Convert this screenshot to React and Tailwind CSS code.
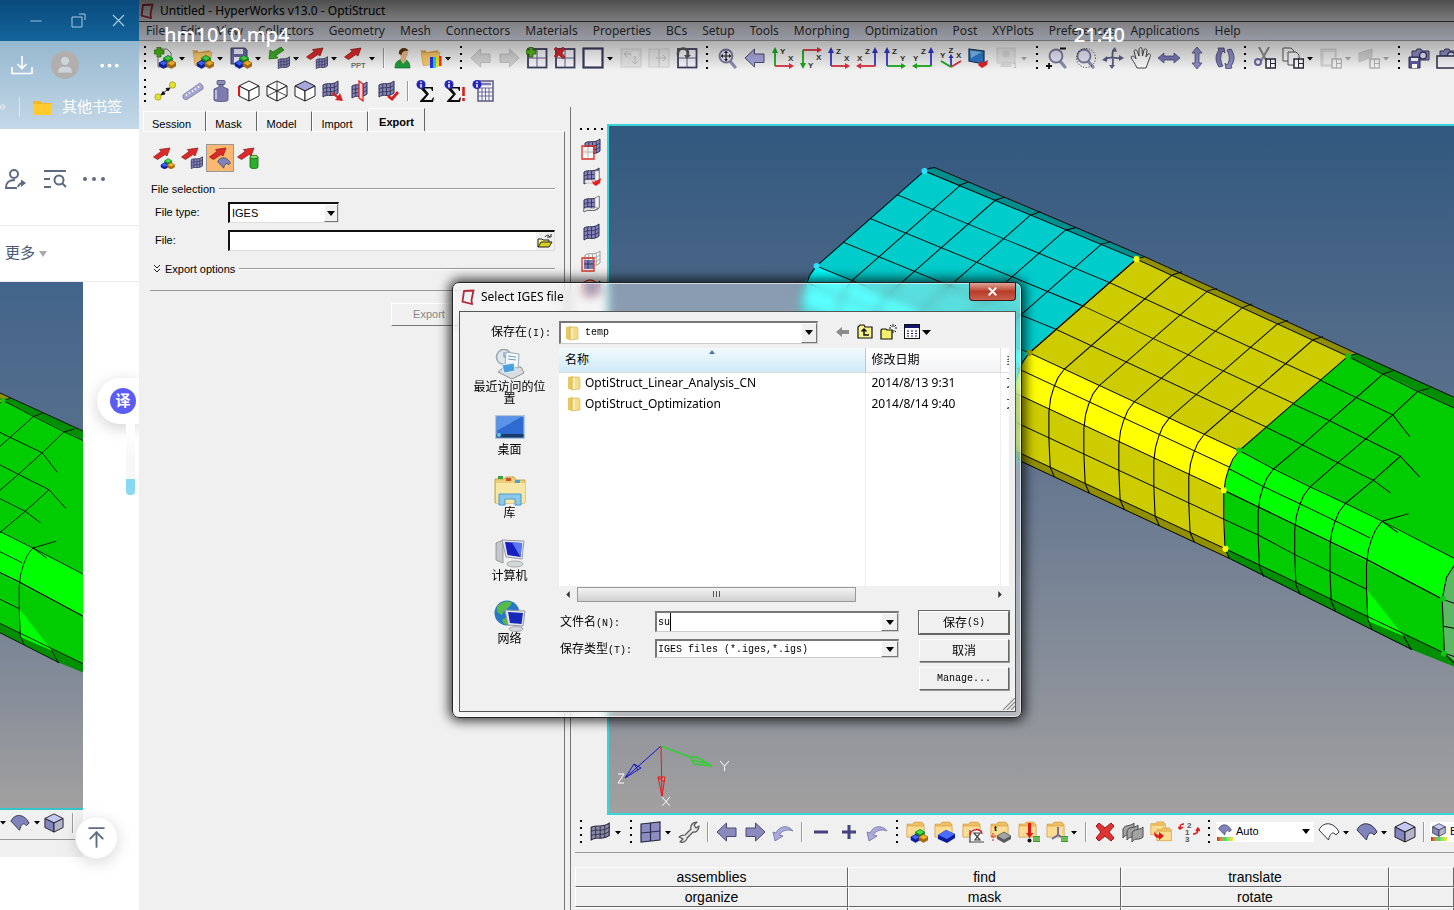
import React, { useState } from "react";
import { Minus, X, User, MoreHorizontal, ChevronsRight, ArrowUpToLine } from "lucide-react";

/* ---------- small drawing parts shared by the toolbar icons (22 x 22 box) ---------- */

function Block({ x, y, top, side }) {
  return (
    <g transform={`translate(${x} ${y})`} stroke={side} strokeWidth="0.6">
      <path d="M0 2.6 4.5 0 9 2.6V5.4L4.5 8 0 5.4Z" fill={side} />
      <path d="M0 2.6 4.5 0 9 2.6 4.5 5.2Z" fill={top} />
    </g>
  );
}

function Blocks() {
  return (
    <g>
      <Block x={9.5} y={8.5} top="#4be04b" side="#0b8a1c" />
      <Block x={5} y={13.5} top="#3c66ff" side="#0a1c9c" />
      <Block x={13} y={13.5} top="#f7b42c" side="#a86a08" />
    </g>
  );
}

function Mesh({ x = 0, y = 0, s = 1, fill = "#8484c0", line = "#2c2c48" }) {
  return (
    <g transform={`translate(${x} ${y}) scale(${s})`} stroke={line}>
      <path d="M1 5C6 2 10 6 16 1V13C10 18 6 13 1 17Z" fill={fill} strokeWidth="1" />
      <path d="M1 9C6 6 10 10 16 5M1 13C6 10 10 14 16 9M4.7 4V15M8.5 4V15.500M12.300 3.500V15" fill="none" strokeWidth="0.8" />
    </g>
  );
}

function OutArrow({ fill = "#dc2a2a", edge = "#8a1414" }) {
  return <path d="M0.500 10 8 4.500 6.500 2.500 17 1 14 9 12 7.500 4.500 12.500Z" fill={fill} stroke={edge} strokeWidth="0.7" />;
}

function Folder({ fill = "#f6c869" }) {
  return (
    <g>
      <path d="M1 3.500 5 3 7 5 18 3V16L3 18Z" fill="#e0a94c" />
      <path d="M1 3.500 3 6 20 5 18 17 3 18.500Z" fill={fill} stroke="#c99238" strokeWidth="0.5" />
    </g>
  );
}

// upright folder used by the model entity buttons
function TabFolder() {
  return (
    <g stroke="#c99238" strokeWidth="0.5">
      <path d="M1 3H7L8 1H16L17 3H18V16H1Z" fill="#f0bf60" />
      <path d="M1 5H18V16H1Z" fill="#fbdc90" />
    </g>
  );
}

function Grid4() {
  return (
    <g>
      <rect x="2" y="2" width="18.500" height="18.500" fill="#f4f4fa" stroke="#3e3e5e" strokeWidth="1.800" />
      <path d="M11 3V20M3 11H20" stroke="#5a5a7c" strokeWidth="1" />
    </g>
  );
}

function Surface({ fill = "#7f83bb" }) {
  return (
    <path
      d="M1 9C3 4 8 2 12 3 16 4 19 7 21 11L18 14C15 10 12 12 10.500 19L1 9Z"
      fill={fill}
      stroke="#333348"
      strokeWidth="1"
      strokeLinejoin="round"
    />
  );
}

function Cube({ top = "none", left = "none", right = "none", x = 0 }) {
  return (
    <g transform={`translate(${x} 0)`} stroke="#1e1e1e" strokeWidth="1" strokeLinejoin="round">
      <path d="M1 6 11 1 21 6 11 11Z" fill={top} />
      <path d="M1 6V16L11 21V11Z" fill={left} />
      <path d="M21 6V16L11 21V11Z" fill={right} />
    </g>
  );
}

function Lens() {
  return (
    <g>
      <path d="M13 13 19 20" stroke="#8a8ab0" strokeWidth="3.200" strokeLinecap="round" />
      <circle cx="10" cy="9" r="6.500" fill="#e4e6f6" stroke="#77779b" strokeWidth="1.800" />
    </g>
  );
}

function MiniGrid() {
  return (
    <g>
      <rect x="12" y="12" width="9.500" height="9" fill="#fff" stroke="#2a2a3a" strokeWidth="1.500" />
      <path d="M16.500 12V21M16.500 16.500H21" stroke="#2a2a3a" strokeWidth="1" />
    </g>
  );
}

function BigArrow({ flip, fill = "#8a8abf" }) {
  return (
    <path
      transform={flip ? "translate(22 0) scale(-1 1)" : undefined}
      d="M1 11 10.500 2V7H20V15.500H10.500V20Z"
      fill={fill}
      stroke="#4a4a70"
      strokeWidth="1"
    />
  );
}

function Undo() {
  return <path d="M1 11 3 20 11 15 7.500 14C10 9 16 8 21 10 16 3 7 5 4 12Z" fill="#a9a9dc" stroke="#6e6ea4" strokeWidth="0.8" />;
}

function Info() {
  return (
    <g>
      <circle cx="5" cy="4.500" r="4.500" fill="#2626b8" />
      <path d="M5 1.500V3M5 4V7.500" stroke="#fff" strokeWidth="1.500" />
    </g>
  );
}

function Sigma() {
  return <path d="M4 7H17V11H16L15 8.500H8.500L13 14 8 20H15.500L17 17.500H18L17 22H4V21L10 14.500 4 8Z" fill="#0a0a0a" />;
}

function Camera() {
  return (
    <g>
      <path d="M4 4H8L9 2H13L14 4H21V13H4Z" fill="#8a8ac0" stroke="#3a3a5c" strokeWidth="1" />
      <circle cx="15" cy="8.500" r="3.500" fill="#dfe3ff" stroke="#3a3a5c" strokeWidth="1.500" />
    </g>
  );
}

const COLORS = { r: "#d9303e", g: "#18a818", b: "#3535cc" };

function Axes({ up, side, upName, sideName, left, down }) {
  const x = left ? 19 : 3;
  const y = down ? 3 : 19;
  return (
    <g>
      <g fill="none" strokeWidth="1.800">
        <path d={down ? `M${x} 3V19` : `M${x} 19V3`} stroke={COLORS[up]} />
        <path d={left ? `M19 ${y}H3` : `M3 ${y}H19`} stroke={COLORS[side]} />
      </g>
      <path d={down ? `M${x - 3} 16H${x + 3}L${x} 22Z` : `M${x - 3} 6H${x + 3}L${x} 0Z`} fill={COLORS[up]} />
      <path d={left ? `M5 ${y - 3}V${y + 3}L0 ${y}Z` : `M17 ${y - 3}V${y + 3}L22 ${y}Z`} fill={COLORS[side]} />
      <g fontFamily="Liberation Sans" fontWeight="700" fontSize="8" fill="#333">
        <text x={left ? 9 : 8} y={down ? 21 : 7}>{upName}</text>
        <text x={left ? 1 : 16} y={down ? 13 : 14}>{sideName}</text>
      </g>
    </g>
  );
}

const PLUS = "M3 0H7V3H10V7H7V10H3V7H0V3H3Z";

const ICONS = {
  newModel: <><path d="M4 2H13L17 6V20H4Z" fill="#f2f2f2" stroke="#777" strokeWidth="1" /><path d={PLUS} fill="#4fb31c" stroke="#2c7008" strokeWidth="0.7" /><Blocks /></>,
  open: <><Folder /><Blocks /></>,
  save: <><path d="M1 1H15L17 3V17H1Z" fill="#6a6aa4" stroke="#3c3c64" strokeWidth="1" /><path d="M4 2H13V7H4ZM4 10H13V16H4Z" fill="#eef" /><Blocks /></>,
  importMesh: <><path d="M1 12 2 3 5 5 13 0 16 3 8 8.500 10 11Z" fill="#3fae28" stroke="#1e6a10" strokeWidth="0.7" /><Mesh x={9.500} y={9} s={0.75} /></>,
  exportMesh: <><OutArrow /><Mesh x={9.500} y={9} s={0.75} /></>,
  ppt: <><OutArrow /><text x="7" y="21" fontFamily="Liberation Sans" fontSize="7.500" fill="#333">PPT</text></>,
  user: <><path d="M3 21C3 14 7 13 11 12 17 13 18 17 18 21Z" fill="#1d9a3c" stroke="#0c6022" strokeWidth="0.6" /><path d="M9 9H14V14L11 17 8.500 13Z" fill="#e5b487" /><ellipse cx="12" cy="6.500" rx="4" ry="5" fill="#e8b88c" /><path d="M7 7C6 0 15 -1 16.500 4 13 3.500 10 4 9.500 8Z" fill="#5a3314" /></>,
  report: <><Folder /><path d="M10 10H13V21H10Z" fill="#2233ee" /><path d="M13 10H16V21H13Z" fill="#14d8e8" /><path d="M16 9H19V20H16Z" fill="#f4e310" /><path d="M19 9H21.500V19H19Z" fill="#ee2c14" /></>,
  back: <BigArrow />,
  forward: <BigArrow flip />,
  addPage: <><Grid4 /><path d={PLUS} fill="#58b81e" stroke="#25680a" strokeWidth="0.8" /></>,
  delPage: <><Grid4 /><path d="M0 2 2 0 5 3 9 0 11 2 8 6 11 10 9 12 5 8 2 11 0 9 3 6Z" fill="#d8262c" stroke="#7f1014" strokeWidth="0.5" /></>,
  window: <rect x="1.500" y="1.500" width="19" height="19" fill="#fbfbfd" stroke="#3a3a5a" strokeWidth="2.200" />,
  expand: <><rect x="1" y="2" width="20" height="18" fill="#c9c9cf" stroke="#888" /><path d="M4 7H11M4 7 7 4M4 7 7 10M15 9V17M12 14 15 17 18 14" stroke="#555" fill="none" /><rect x="12" y="4" width="6" height="5" fill="#eee" /></>,
  swap: <><rect x="1" y="2" width="20" height="18" fill="#d6d6dc" stroke="#888" /><path d="M11 2V20M8 11H18M15 8 18 11 15 14" stroke="#555" fill="none" /></>,
  syncPage: <><Grid4 /><path d="M2 8C1 1 10 -1 12 5V9" fill="none" stroke="#555" strokeWidth="2.500" /><path d="M8 8H15L11 12Z" fill="#555" /></>,
  fit: <><Lens /><path d="M10 4.500V13.500M5.500 9H14.500" stroke="#222" strokeWidth="1.200" /><path d="M10 3.500 8 6H12ZM10 14.500 8 12H12ZM4.500 9 7 7V11ZM15.500 9 13 7V11Z" fill="#222" /></>,
  prevView: <BigArrow fill="#a6a6dc" />,
  xy: <Axes up="g" side="r" upName="Y" sideName="X" />,
  yx: <Axes up="g" side="r" upName="Y" sideName="X" down />,
  xz: <Axes up="b" side="r" upName="Z" sideName="X" />,
  zx: <Axes up="b" side="r" upName="Z" sideName="X" left />,
  yz: <Axes up="b" side="g" upName="Z" sideName="Y" />,
  zy: <Axes up="b" side="g" upName="Z" sideName="Y" left />,
  iso: <><path d="M11 20V8" stroke="#3535cc" strokeWidth="1.800" /><path d="M11 20 1 14" stroke="#18a818" strokeWidth="2" /><path d="M11 20 21 14" stroke="#d9303e" strokeWidth="2" /><path d="M8.500 11H13.500L11 7Z" fill="#3535cc" /><g fontFamily="Liberation Sans" fontWeight="700" fontSize="8" fill="#333"><text x="8.500" y="6">Z</text><text x="0" y="11">Y</text><text x="16" y="11">X</text></g></>,
  screenView: <><path d="M1 2 16 4V17L1 14Z" fill="#2c78c8" stroke="#16304c" strokeWidth="1.200" /><path d="M2 3.500 14 5 3 11Z" fill="#7ab8ee" /><path d="M10 18 13 14 14 16 20 13 19 18 14 21Z" fill="#e02020" /></>,
  userView: <><rect x="1" y="1" width="18" height="15" fill="#b4c8dc" stroke="#888" /><circle cx="10" cy="7" r="3.500" fill="#b08c74" /><path d="M4 20C5 12 15 12 16 20Z" fill="#6cb088" /><text x="17" y="21" fontSize="7" fontFamily="Liberation Sans">1</text></>,
  zoomInOut: <><Lens /><path d="M14 1.500H20M0 19H6M3 16V22" stroke="#111" strokeWidth="1.800" /></>,
  zoomBox: <><Lens /><ellipse cx="12" cy="11" rx="9.500" ry="9.500" fill="none" stroke="#222" strokeWidth="1" strokeDasharray="1 1.800" /></>,
  pan: <><path d="M12 2C8 8 13 14 10 20M4 12C8 9 14 12 20 11" fill="none" stroke="#5c5c84" strokeWidth="1.800" /><path d="M10 4 13 0 15 5ZM22 11 17 8V14ZM0 13 5 9V15ZM7 18 10 22 13 18Z" fill="#5c5c84" /></>,
  hand: <path d="M7 21C5 16 2 13 1 10 3 8 5 10 6 12L4 4C5 2 7 3 7.500 5L9 9 9 2C10 0 12 0 12 2L12.500 9 14 3C15 1 17 2 17 4L16 10 18 7C20 6 21 8 20 10L16 21Z" fill="#fafafa" stroke="#444" strokeWidth="1" />,
  leftRight: <path d="M0 11 6 6V9H16V6L22 11 16 16V13H6V16Z" fill="#7878b4" stroke="#4a4a78" strokeWidth="0.8" />,
  upDown: <path d="M11 0 16 6H13V16H16L11 22 6 16H9V6H6Z" fill="#8c8cc4" stroke="#4a4a78" strokeWidth="0.8" />,
  rotate: <><path d="M9 4C6 8 6 14 9 19L5 20C1 14 1 8 5 3L4 1 10 1 11 6Z" fill="#7a7ab4" stroke="#40406a" strokeWidth="0.8" /><path d="M13 3C16 8 16 14 13 18L11 16 12 22 18 21 17 19C21 14 21 8 17 2Z" fill="#8c8cc4" stroke="#40406a" strokeWidth="0.8" /></>,
  cut: <><path d="M5 0 12 13M15 0 7 14" stroke="#888" strokeWidth="2" /><circle cx="4" cy="15" r="3" fill="none" stroke="#6868a4" strokeWidth="2" /><MiniGrid /></>,
  copy: <><path d="M1 1H9L12 4V14H1Z" fill="#f8f8f8" stroke="#555" /><path d="M6 5H14L17 8V18H6Z" fill="#f8f8f8" stroke="#555" /><MiniGrid /></>,
  paste: <><rect x="1" y="2" width="15" height="17" fill="#b0b0c0" stroke="#777" /><rect x="4" y="5" width="10" height="12" fill="#eee" /><MiniGrid /></>,
  overlay: <><path d="M1 6 14 2V10L1 15Z" fill="#888" stroke="#666" /><MiniGrid /></>,
  saveShot: <><Camera /><path d="M1 10H12V21H1Z" fill="#5c5c9c" stroke="#2c2c50" /><path d="M3 11H10V14H3ZM4 17H9V21H4Z" fill="#fff" /></>,
  shot: <><Camera /><rect x="1" y="9" width="21" height="12" fill="#f2f2f6" stroke="#2c2c44" strokeWidth="1.500" /></>,
  distance: <><circle cx="4" cy="17" r="3.200" fill="#e2e22c" stroke="#8c8c18" strokeWidth="0.6" /><circle cx="18.500" cy="5" r="3.200" fill="#e2e22c" stroke="#8c8c18" strokeWidth="0.6" /><path d="M8 14 15 8.500M7 15 11 14 9 11.500ZM16 8 12 8.500 14 11Z" stroke="#111" strokeWidth="0.900" /></>,
  ruler: <><path d="M1 15 18 3 21 6V9L4 20 1 18Z" fill="#a6a6d4" stroke="#7676a4" strokeWidth="0.8" /><path d="M5 16 4 14M8 14 7 12M11 12 10 10M14 10 13 8M17 8 16 6" stroke="#fff" strokeWidth="1.200" /></>,
  mass: <><rect x="7" y="0.500" width="8" height="4" rx="1" fill="#8f8fbc" stroke="#4c4c74" strokeWidth="0.8" /><path d="M9 4.500H13V7L18 9V20C18 22 4 22 4 20V9L9 7Z" fill="#7c7cae" stroke="#4c4c74" strokeWidth="0.8" /><path d="M6 10V19" stroke="#c0c0e0" strokeWidth="2" /></>,
  cubeEdge: <><Cube top="#fff" left="#fff" right="#fff" /><path d="M1 6V16" stroke="#e01818" strokeWidth="2.200" /></>,
  cubeWire: <><Cube top="#fff" left="#fff" right="#fff" /><path d="M11 1V11M11 11 1 16M11 11 21 16" stroke="#333" strokeWidth="0.9" /></>,
  cubeTop: <Cube top="#a4a8dc" left="#fff" right="#fff" />,
  meshArrow: <><Mesh /><path d="M11 12 16 16 18 13 21 21 13 20 15 18 10 14Z" fill="#d81e1e" /></>,
  meshPlane: <><Mesh x={1} y={1} /><path d="M9 1 13 4V21L9 18Z" fill="#fbd3d3" stroke="#d81e1e" strokeWidth="1.200" /></>,
  meshCheck: <><Mesh /><path d="M10 16 14 19 20 12" fill="none" stroke="#d81e1e" strokeWidth="2.800" /></>,
  sigma: <><Sigma /><Info /></>,
  sigmaAlert: <><g transform="translate(-1 0)"><Sigma /></g><Info /><path d="M19.500 7V16M19.500 18V21" stroke="#d81e1e" strokeWidth="2.600" /></>,
  calc: <><rect x="6" y="1" width="15" height="20" fill="#f4f4fa" stroke="#5a5a80" strokeWidth="1.500" /><path d="M8 4H19" stroke="#7c7cac" strokeWidth="2.500" /><path d="M6 8H21M6 12H21M6 16H21M10 8V21M13.500 8V21M17 8V21" stroke="#6a6a94" strokeWidth="1" /><Info /></>,
  exportModel: <><OutArrow /><g transform="translate(4 5) scale(.8)"><Blocks /></g></>,
  exportGeom: <><OutArrow /><g transform="translate(8 9) scale(.64)"><Surface /></g></>,
  exportDrum: <><OutArrow /><path d="M13 10V20C13 22 21 22 21 20V10Z" fill="#2cb02c" stroke="#136013" strokeWidth="0.8" /><ellipse cx="17" cy="10" rx="4" ry="1.800" fill="#8ade60" stroke="#136013" strokeWidth="0.8" /></>,
  maskBox: <><Mesh x={4} y={0} /><path d="M4 9H13V20H4Z" fill="#fff" fillOpacity="0.9" /><path d="M2 8H14V21H2Z" fill="none" stroke="#dc3020" strokeWidth="1.300" /><path d="M8 9V20M3 14H13" stroke="#aaa" strokeWidth="0.8" /></>,
  maskCheck: <><Mesh x={3} y={1} /><path d="M15 5H19V14L15 15Z" fill="#f4f4f4" stroke="#999" strokeWidth="0.6" /><path d="M5 14H15V17H5Z" fill="#f4f4f4" stroke="#999" strokeWidth="0.6" /><path d="M12 15 15 16 21 12 20 17 16 20 13 18Z" fill="#e81e1e" /></>,
  maskPart: <><Mesh x={3} y={1} /><path d="M15 4 19 2V14L15 15Z" fill="#f4f4f4" stroke="#888" strokeWidth="0.6" /><path d="M4 15C8 12 12 16 17 13V15C12 18 8 14 4 18Z" fill="#f4f4f4" stroke="#888" strokeWidth="0.6" /></>,
  maskFull: <Mesh x={3} y={1} />,
  maskRev: <><Mesh x={4} y={0} fill="#f4f4f4" line="#999" /><path d="M4 10H14V19H4Z" fill="#7a7ab0" /><path d="M8 10V19M4 14H14" stroke="#2c2c48" strokeWidth="0.8" /><path d="M2 8H14V21H2Z" fill="none" stroke="#dc3020" strokeWidth="1.300" /></>,
  maskRound: <><Mesh x={4} y={2} /><circle cx="10" cy="10" r="8" fill="none" stroke="#dc3020" strokeWidth="1.500" /></>,
  meshGray: <g transform="translate(0 1) scale(1.200 1.050)"><Mesh fill="#8a8aa6" /></g>,
  fourView: <><path d="M1 3 20 1V19L1 21Z" fill="#8c8cc4" stroke="#2c2c44" strokeWidth="1.200" /><path d="M10.500 2V20M1 12 20 10" stroke="#2c2c44" strokeWidth="1.200" /></>,
  wrench: <path d="M1 16C3 14 5 14 7 14L13 8C12 4 15 1 19 1L16 4 18 7 21 5C21 9 18 12 15 11L9 17C9 20 5 22 2 21L5 18Z" fill="#e6e6e6" stroke="#555" strokeWidth="1.200" strokeLinejoin="round" />,
  undo: <Undo />,
  minus: <path d="M4 9.500H18V12.500H4Z" fill="#44447c" />,
  plus: <path d="M9.500 4H12.500V9.500H18V12.500H12.500V18H9.500V12.500H4V9.500H9.500Z" fill="#44447c" />,
  folderModel: <><TabFolder /><Blocks /></>,
  folderPart: <><TabFolder /><path d="M4 14 12 9 21 13V17L13 22 4 18Z" fill="#0c1c98" /><path d="M4 14 12 9 21 13 13 18Z" fill="#4a6cff" /></>,
  folderTime: <><TabFolder /><rect x="8" y="8" width="13" height="13" fill="#f4f4f4" /><path d="M8 21V9M7 21H22M12 12H18L13 19H18Z" fill="none" stroke="#444" strokeWidth="1.200" /><path d="M8 14C9 7 19 7 20 13" fill="none" stroke="#e01818" strokeWidth="1.500" /></>,
  folderTrace: <><TabFolder /><text x="4" y="10" fontFamily="Liberation Serif" fontWeight="700" fontSize="9">t</text><path d="M3 12V20M1 15H6" stroke="#d02020" strokeWidth="1" strokeDasharray="2 1" /><path d="M7 15 14 11 21 15V18L14 22 7 18Z" fill="#5c5c5c" /><path d="M7 15 14 11 21 15 14 19Z" fill="#a4a4a4" stroke="#444" strokeWidth="0.6" /></>,
  folderLoad: <><TabFolder /><path d="M10 2H13V12H15.500L11.500 17 8 12H10Z" fill="#e01818" /><circle cx="11.500" cy="19.500" r="2" fill="#111" /><path d="M15 15H22V21H15Z" fill="#3c9c24" /><path d="M15 17H22M15 19H22" stroke="#d4f0c8" strokeWidth="0.7" /></>,
  folderSys: <><TabFolder /><path d="M12 6V14L6 18M12 14 19 18" fill="none" stroke="#6868a4" strokeWidth="1.800" /><path d="M15 15H22V21H15Z" fill="#3c9c24" /><path d="M15 17H22M15 19H22" stroke="#d4f0c8" strokeWidth="0.7" /></>,
  remove: <path d="M2 5 5 2 11 7 17 2 20 5 15 11 20 17 17 20 11 15 5 20 2 17 7 11Z" fill="#e03434" stroke="#a01414" strokeWidth="1" strokeLinejoin="round" />,
  cards: <g fill="#a2a2a2" stroke="#4c4c4c" strokeWidth="1"><path d="M1 8C3 3 8 6 12 2V12C8 16 4 12 1 17Z" /><path d="M5 10C7 5 12 8 16 4V14C12 18 8 14 5 19Z" /><path d="M10 12C12 7 17 10 21 6V16C17 20 13 16 10 21Z" /></g>,
  moveFolder: <><g transform="scale(.85)"><TabFolder /></g><g transform="translate(6 6) scale(.85)"><TabFolder /></g><path d="M5 10C5 13 7 14 9 14V11L14 15 9 19V17C5 17 3 14 5 10Z" fill="#e01818" /></>,
  renumber: <><g fontFamily="Liberation Sans" fontSize="8" fontWeight="700" fill="#555"><text x="9" y="7">2</text><text x="7" y="14">1</text><text x="7" y="21">3</text></g><path d="M6 3C2 3 2 5 2 8M0 6 2 8 5 6M15 13C19 13 20 11 20 8M18 10 20 7 22 10" fill="none" stroke="#e01818" strokeWidth="1.500" /></>,
  surfWire: <Surface fill="#fafafa" />,
  surfFill: <Surface />,
  cubeFill: <Cube top="#c4c8f4" left="#8286c0" right="#b4b4cc" />,
};

function Icon({ name, className = "size-[22px]" }) {
  return (
    <svg viewBox="0 0 22 22" className={className} aria-hidden="true">
      {ICONS[name]}
    </svg>
  );
}

/* Each entry is [icon, label, flags]; ":" is a grip and "|" a divider. */
const TOP_ROW = [
  ":", ["newModel", "New", "m"], ["open", "Open", "m"], ["save", "Save", "m"], ["importMesh", "Import", "m"], ["exportMesh", "Export", "m"], ["ppt", "Export to PPT", "m"], "|",
  ["user", "User profiles"], ["report", "Report", "m"],
  ":", ["back", "Previous page", "d"], ["forward", "Next page", "d"], ["addPage", "Add page"], ["delPage", "Delete page"], ["window", "Page layout", "m"], ["expand", "Expand window", "d"], ["swap", "Swap windows", "d"], ["syncPage", "Synchronize"],
  ":", ["fit", "Fit"], ["prevView", "Previous view"], ["xy", "XY top"], ["yx", "XY bottom"], ["xz", "XZ left"], ["zx", "XZ right"], ["yz", "YZ front"], ["zy", "YZ rear"], ["iso", "Isometric"], ["screenView", "Reverse view"], ["userView", "User views", "dm"],
  ":", ["zoomInOut", "Zoom"], ["zoomBox", "Circle zoom"], ["pan", "Center"], ["hand", "Pan"], ["leftRight", "Rotate left/right"], ["upDown", "Rotate up/down"], ["rotate", "Rotate"],
  ":", ["cut", "Cut"], ["copy", "Copy", "m"], ["paste", "Paste", "dm"], ["overlay", "Overlay", "dm"],
  ":", ["saveShot", "Save image"], ["shot", "Capture"],
];

const CHECK_ROW = [
  ":", ["distance", "Distance"], ["ruler", "Length"], ["mass", "Mass"], ["cubeEdge", "Edges"], ["cubeWire", "Features"], ["cubeTop", "Faces"], ["meshArrow", "Normals"], ["meshPlane", "Penetration"], ["meshCheck", "Check elements"],
  "|", ["sigma", "Summary"], ["sigmaAlert", "Count"], ["calc", "Card editor"],
];

const BOTTOM_ROW = [
  ":", ["meshGray", "Mesh", "m"], ":", ["fourView", "Views", "m"], ["wrench", "Options"], "|", ["back", "Back"], ["forward", "Forward"], ["undo", "Undo view"], "|", ["minus", "Zoom out"], ["plus", "Zoom in"], ["undo", "Reset zoom"],
  ":", ["folderModel", "Assemblies"], ["folderPart", "Components"], ["folderTime", "Properties"], ["folderTrace", "Materials"], ["folderLoad", "Load collectors"], ["folderSys", "System collectors", "m"], "|",
  ["remove", "Delete"], ["cards", "Card edit"], ["moveFolder", "Organize"], ["renumber", "Renumber"], ":",
];

function Grip() {
  return (
    <span className="flex w-3 shrink-0 flex-col items-center gap-[5px]">
      {[0, 1, 2, 3].map((i) => (
        <span key={i} className="size-[2px] bg-black" />
      ))}
    </span>
  );
}

function Divider() {
  return <span className="mx-1 h-5 w-[2px] shrink-0 border-l border-[#999] bg-white" />;
}

function Tool({ icon, label, flags = "" }) {
  const dim = flags.includes("d");
  return (
    <span className={dim ? "flex shrink-0 items-center opacity-30 grayscale" : "flex shrink-0 items-center"}>
      <button type="button" aria-label={label} disabled={dim} className="flex h-7 w-7 items-center justify-center">
        <Icon name={icon} />
      </button>
      {flags.includes("m") && (
        <button type="button" aria-label={label + " menu"} disabled={dim} className="flex h-7 w-[10px] items-center justify-start">
          <svg viewBox="0 0 6 4" className="mt-[2px] h-1 w-[6px]"><path d="M0 0H6L3 3.500Z" fill="#000" /></svg>
        </button>
      )}
    </span>
  );
}

function ToolRow({ items }) {
  return items.map((item, i) => {
    if (item === ":") return <Grip key={i} />;
    if (item === "|") return <Divider key={i} />;
    return <Tool key={i} icon={item[0]} label={item[1]} flags={item[2]} />;
  });
}

/* ---------- finite element model ---------- */

const lerp = (a, b, t) => [a[0] + (b[0] - a[0]) * t, a[1] + (b[1] - a[1]) * t];

function gridLines(a, b, c, d, cols, rows) {
  let out = "";
  for (let i = 0; i <= cols; i++) out += `M${lerp(a, b, i / cols)}L${lerp(d, c, i / cols)}`;
  for (let j = 0; j <= rows; j++) out += `M${lerp(a, d, j / rows)}L${lerp(b, c, j / rows)}`;
  return out;
}

// the side wall drops away from a point of the front edge along this profile
const PROFILE = [[-15, 25], [-25, 55], [-32, 85], [-36, 125], [-36, 200], [-33, 285], [-23, 313]];

function sideLines(points) {
  return points.map(([x, y]) => `M${x},${y}` + PROFILE.map(([dx, dy]) => `L${x + dx},${y + dy}`).join("")).join("");
}

const A = [336, 90];
const B = [829, 346];
const C = [580, 618];
const D = [85, 366];
const E = [1321, 628];
const F = [1068, 902];
const frontCyan = [0, 1, 2, 3, 4, 5, 6].map((i) => lerp(D, C, i / 6));
const frontYellow = [0, 1, 2, 3, 4, 5, 6].map((i) => lerp(C, F, i / 6));
const frontGreen = [[1148, 955], [1233, 1007], [1315, 1055], [1400, 1107]];

function Dots({ points, fill }) {
  return points.map(([x, y]) => <ellipse key={x} cx={x} cy={y} rx="7" ry="9" fill={fill} />);
}

function Model() {
  return (
    <g strokeLinejoin="round">
      {/* cyan section */}
      <path d="M85 366 60 410 45 480 45 650 60 680 560 940 560 618Z" fill="#00cccc" />
      <path d="M85 366 60 410 45 480 545 748 580 618Z" fill="#00ffff" />
      <path d="M336 90 360 80 850 340 829 346Z" fill="#008f8f" />
      <path d="M336 90 829 346 580 618 85 366Z" fill="#00cccc" />
      {/* yellow section */}
      <path d="M547 903 1036 1187 1045 1215 557 931Z" fill="#8f8f00" />
      <path d="M544 733 1032 1017 1036 1187 547 903Z" fill="#cccc00" />
      <path d="M580 618 1068 902 1045 950 1032 1017 544 733 557 666Z" fill="#ffff00" />
      <path d="M829 346 850 338 1342 620 1321 628Z" fill="#8f8f00" />
      <path d="M829 346 1321 628 1068 902 580 618Z" fill="#cccc00" />
      {/* green section */}
      <path d="M1036 1187 1045 1215 1470 1480 1580 1535V1500L1545 1490Z" fill="#008f00" />
      <path d="M1032 1017 1540 1333 1545 1490 1036 1187Z" fill="#00cc00" />
      <path d="M1365 1305 1450 1440 1368 1397Z" fill="#00ff00" />
      <path d="M1321 628 1342 620 1600 765V797Z" fill="#008f00" />
      <path d="M1321 628 1600 797V1235L1400 1107 1068 902Z" fill="#00cc00" />
      <path d="M1068 902 1400 1107 1580 1222 1550 1270 1540 1333 1032 1017 1045 950Z" fill="#00ff00" />
      <path d="M1600 1220 1568 1235 1550 1270 1540 1333 1545 1490 1600 1540Z" fill="#5db865" />

      <g fill="none" stroke="#000" strokeWidth="2.500">
        <path d={gridLines(A, B, C, D, 6, 4)} />
        <path d={gridLines(B, E, F, C, 6, 4)} />
        <path d={sideLines(frontCyan) + sideLines(frontYellow) + sideLines(frontGreen)} />
        <path d="M62 414 557 666 1045 950M544 733 1032 1017M545 818 1034 1102M547 903 1036 1187M557 931 1045 1215M45 480 544 733" />
        <path d="M336 90 348 82 360 80 850 340 1342 620 1600 765M416 132 438 122M500 175 522 166M583 218 606 208M664 262 688 254M745 303 770 295M829 346 850 338M912 392 935 382M993 439 1016 431M1075 487 1098 476M1158 534 1181 524M1240 580 1263 571M1321 628 1342 620M1402 680 1426 669M1483 730 1510 721" />
        <path d="M1321 628 1402 680 1483 730 1600 797M1257 698 1340 748 1425 798 1465 862M1195 768 1278 815 1362 868 1443 918 1487 978M1132 835 1215 885 1297 937 1380 988 1420 1025" />
        <path d="M1402 680 1340 748 1278 815 1215 885 1148 955M1483 730 1425 798 1362 868 1297 937 1233 1007M1443 918 1380 988 1315 1055M1400 1107 1462 1085M1400 1107 1437 1140" />
        <path d="M1068 902 1148 955 1233 1007 1315 1055 1400 1107 1600 1235M1045 955 1122 1005 1207 1055 1290 1105 1372 1155M1034 1102 1117 1150 1199 1205 1282 1255 1365 1305M1036 1187 1545 1490 1580 1505M1045 1215 1470 1480M1600 1220 1568 1235 1550 1270 1540 1333 1545 1490 1568 1520M1450 1440 1468 1480M1540 1333 1600 1360M1543 1412 1600 1425" />
        <path d="M1032 1017 1360 1215 1540 1333" strokeWidth="3.500" />
      </g>
      <Dots points={[A, D]} fill="#3df" />
      <Dots points={[B, [1032, 1017], [1036, 1187]]} fill="#ff0" />
      <Dots points={[C]} fill="#a8a800" />
      <Dots points={[E, F, [1541, 1332], [1544, 1491]]} fill="#12c412" />
    </g>
  );
}

function Viewport() {
  return (
    <div className="relative min-w-0 flex-1 overflow-hidden border-t-2 border-l-2 border-b-2 border-[#35d5d8] bg-linear-to-b from-[#31587f] via-[#64768f] to-[#a2a0a0]">
      <svg viewBox="609 126 845 688" preserveAspectRatio="xMinYMin slice" className="absolute inset-0 size-full">
        <g transform="matrix(.43 0 0 .3444 780 140)">
          <Model />
        </g>
        <g fill="none" strokeWidth="1">
          <path d="M661 746 625 778M625 778 634 764 641 768ZM634 764 638 770" stroke="#1414c8" />
          <path d="M661 746 662 796M658 777H665L662 796ZM658 777 664 782" stroke="#f01414" />
          <path d="M661 746 690 757M690 757 697 757 712 766 694 764ZM692 760 705 763" stroke="#30d030" strokeWidth="1.500" />
        </g>
        <g fill="none" stroke="#fff" strokeWidth="1">
          <path d="M618 774H624L618 783H624" />
          <path d="M662 797 670 806M670 797 662 806" />
          <path d="M720 761 724.500 766 729 761M724.500 766V771" />
        </g>
      </svg>
    </div>
  );
}

/* ---------- browser behind the application ---------- */

function BrowserStrip() {
  return (
    <aside className="relative flex w-[139px] shrink-0 flex-col overflow-hidden bg-white">
      <div className="flex h-[41px] shrink-0 items-center justify-between bg-linear-to-b from-[#0a4a7c] to-[#14659c] pr-[13px] pl-[27px] text-[#a8cbe2]">
        <button type="button" aria-label="Minimize"><Minus size={18} strokeWidth={1.2} /></button>
        <button type="button" aria-label="Restore">
          <svg viewBox="0 0 15 15" className="size-[15px]" fill="none" stroke="currentColor" strokeWidth="1"><path d="M1 4H11V14H1ZM8 1H14V7" /></svg>
        </button>
        <button type="button" aria-label="Close">
          <svg viewBox="0 0 15 15" className="size-[15px]" fill="none" stroke="currentColor" strokeWidth="1.200"><path d="M2 2 13 13M13 2 2 13" /></svg>
        </button>
      </div>
      <div className="flex h-[88px] shrink-0 flex-col bg-linear-to-b from-[#96b8cf] to-[#c4d8e8] text-white">
        <div className="flex h-12 items-center gap-[18px] pl-[11px]">
          <button type="button" aria-label="Downloads">
            <svg viewBox="0 0 22 20" className="h-5 w-[22px]" fill="none" stroke="currentColor" strokeWidth="1.600"><path d="M1 12V18.500H21V12M11 1V13M6.500 9 11 13.500 15.500 9" /></svg>
          </button>
          <button type="button" aria-label="Account" className="flex size-7 items-center justify-center overflow-hidden rounded-full bg-[#b2aead] text-[#ccd4da]">
            <User size={20} fill="currentColor" />
          </button>
          <button type="button" aria-label="More"><MoreHorizontal size={25} strokeWidth={1.6} /></button>
        </div>
        <div className="flex h-9 items-center text-[15px]">
          <ChevronsRight size={12} className="-ml-1" />
          <span className="mx-[11px] h-5 w-px bg-white/50" />
          <svg viewBox="0 0 18 15" className="mr-[11px] ml-[2px] h-[15px] w-[18px]"><path d="M0 1H7L9 3H18V15H0Z" fill="#f3b624" /><path d="M0 4H18V15H0Z" fill="#ffcb2e" /></svg>
          <a href="#bookmarks">其他书签</a>
        </div>
      </div>
      <div className="flex h-[97px] shrink-0 items-center gap-[15px] border-b border-[#eaeaea] pt-1 pl-1 text-[#5d6b82]">
        <button type="button" aria-label="Share with user">
          <svg viewBox="0 0 24 24" className="size-6" fill="none" stroke="currentColor" strokeWidth="2"><circle cx="10" cy="7" r="4" /><path d="M13 21H2C2 15 5 13 11 13" /><path d="M14 20C15 17 17 16 19 16" /><path d="M17 12.500 22 16 17 20Z" fill="currentColor" stroke="none" /></svg>
        </button>
        <button type="button" aria-label="Search list">
          <svg viewBox="0 0 24 24" className="size-6" fill="none" stroke="currentColor" strokeWidth="2"><path d="M1 4H23M1 12H7M1 20H8M19 16 23 20" /><circle cx="16" cy="13" r="4.500" /></svg>
        </button>
        <button type="button" aria-label="More tools">
          <svg viewBox="0 0 24 24" className="size-6" fill="currentColor"><circle cx="3" cy="12" r="2" /><circle cx="12" cy="12" r="2" /><circle cx="21" cy="12" r="2" /></svg>
        </button>
      </div>
      <div className="flex h-14 shrink-0 items-center border-b border-[#eaeaea] pl-[5px]">
        <a href="#more" className="flex items-center gap-1 text-[15px] text-[#4a5a76]">
          更多
          <svg viewBox="0 0 8 6" className="h-[6px] w-2"><path d="M0 0H8L4 6Z" fill="#aaa" /></svg>
        </a>
      </div>
      <div className="flex h-[575px] w-[83px] shrink-0 flex-col overflow-hidden bg-[#f0f0f0]">
        <div className="relative h-[528px] shrink-0 border-b-2 border-[#35c5c8] bg-linear-to-b from-[#42648a] via-[#64768f] to-[#a2a0a0]">
          <svg viewBox="0 282 83 526" className="absolute inset-0 size-full overflow-hidden">
            <g transform="matrix(.378 0 0 .308 -496.400 207)">
              <Model />
            </g>
          </svg>
        </div>
        <div className="flex h-[30px] shrink-0 items-center border-b border-[#999] pb-1">
          <svg viewBox="0 0 6 4" className="h-1 w-[6px]"><path d="M0 0H6L3 3.500Z" /></svg>
          <Icon name="surfFill" className="mx-1 size-5" />
          <svg viewBox="0 0 6 4" className="h-1 w-[6px]"><path d="M0 0H6L3 3.500Z" /></svg>
          <Icon name="cubeFill" className="mx-1 size-5" />
          <Divider />
        </div>
      </div>
      <div className="absolute top-[378px] right-0 flex h-[46px] w-[42px] items-center rounded-l-full bg-white pl-[13px] shadow-[0_4px_16px_rgba(0,0,0,0.18)]">
        <button type="button" className="flex size-[26px] items-center justify-center rounded-full bg-[#5b5bf6] text-[15px] font-bold text-white">译</button>
      </div>
      <div className="absolute top-[424px] right-[4px] h-[68px] w-[9px] rounded-b bg-linear-to-b from-white via-[#f8f8f8] to-[#f8f8f8]">
        <div className="mt-[55px] h-4 rounded-b bg-[#86d9f0]" />
      </div>
      <button type="button" aria-label="Back to top" className="absolute top-[816px] left-[75px] flex size-[43px] items-center justify-center rounded-full border border-[#eee] bg-white text-[#5d6b82] shadow-[0_4px_16px_rgba(0,0,0,0.15)]">
        <ArrowUpToLine size={25} strokeWidth={1.8} />
      </button>
    </aside>
  );
}

/* ---------- application ---------- */

const MENUS = ["File", "Edit", "View", "Collectors", "Geometry", "Mesh", "Connectors", "Materials", "Properties", "BCs", "Setup", "Tools", "Morphing", "Optimization", "Post", "XYPlots", "Preferences", "Applications", "Help"];

function Logo() {
  return <svg viewBox="0 0 14 16" className="h-4 w-[14px] shrink-0"><path d="M3 2 12.500 1.500 10.500 11 11 15 1.500 12.500Z" fill="none" stroke="#b02a3c" strokeWidth="1.800" /></svg>;
}

function DropArrow({ className = "h-4 w-[15px]" }) {
  return (
    <span className={"pointer-events-none flex items-center justify-center border border-t-white border-l-white border-r-[#777] border-b-[#777] bg-[#f0f0f0] " + className}>
      <svg viewBox="0 0 8 5" className="h-[5px] w-2"><path d="M0 0H8L4 5Z" /></svg>
    </span>
  );
}

function GroupTitle({ children }) {
  return (
    <div className="flex h-4 items-center gap-1">
      {children}
      <span className="h-[2px] flex-1 border-t border-[#999] bg-white" />
    </div>
  );
}

const SUNKEN = "border-t-2 border-l-2 border-r border-b border-t-[#111] border-l-[#111] border-r-[#ddd] border-b-[#ddd] bg-white";

function ExportPanel() {
  const [tab, setTab] = useState("Export");
  const [mode, setMode] = useState("exportGeom");
  const tabs = [["Session", "w-[63px]"], ["Mask", "w-[51px]"], ["Model", "w-[55px]"], ["Import", "w-14"], ["Export", "w-[57px]"]];
  const modes = [["exportModel", "Export model"], ["exportMesh", "Export solver deck"], ["exportGeom", "Export geometry"], ["exportDrum", "Export connectors"]];
  return (
    <section className="flex w-[432px] shrink-0 flex-col border-r border-[#777] pl-1">
      <div className="flex h-6 shrink-0 items-end">
        {tabs.map(([name, width]) => (
          <button
            key={name}
            type="button"
            onClick={() => setTab(name)}
            className={
              width + " shrink-0 border-r border-r-[#666] border-t border-t-white border-l border-l-white " +
              (tab === name ? "h-[23px] pt-1 font-bold" : "h-5 pt-1 pr-[6px]")
            }
          >
            {name}
          </button>
        ))}
      </div>
      <div className="mr-[5px] flex flex-1 flex-col border-t border-r border-t-white border-r-[#777] pt-3 pl-[7px]">
        <div className="flex h-7 items-center">
          {modes.map(([icon, label]) => (
            <button
              key={icon}
              type="button"
              aria-label={label}
              onClick={() => setMode(icon)}
              className={"flex size-7 items-center justify-center " + (mode === icon ? "border border-[#999] bg-[#fbb870]" : "")}
            >
              <Icon name={icon} />
            </button>
          ))}
        </div>
        <div className="mt-[9px] mr-[9px] pl-px">
          <GroupTitle>File selection</GroupTitle>
          <div className="mt-[5px] flex h-[21px] items-center pl-1">
            <label htmlFor="filetype" className="w-[73px]">File type:</label>
            <div className={"relative h-[21px] w-[111px] " + SUNKEN}>
              <select id="filetype" className="size-full appearance-none pl-[2px] outline-none" defaultValue="IGES">
                <option>IGES</option>
              </select>
              <DropArrow className="absolute top-0 right-0 h-[18px] w-[14px]" />
            </div>
          </div>
          <div className="mt-[7px] flex h-[21px] items-center pl-1">
            <label htmlFor="file" className="w-[73px] shrink-0">File:</label>
            <div className={"flex h-[21px] flex-1 " + SUNKEN}>
              <input id="file" className="min-w-0 flex-1 px-1 outline-none" />
              <button type="button" aria-label="Browse" className="flex w-[18px] items-center justify-center bg-[#f0f0f0]">
                <svg viewBox="0 0 16 16" className="size-4"><path d="M1 14V6H5L6 7H12V9" fill="#f6f28c" stroke="#222" /><path d="M1 14 4 9H15L12 14Z" fill="#d8d020" stroke="#222" /><path d="M8 4C10 1 12 2 13 4M10 4H14V1" fill="none" stroke="#222" /></svg>
              </button>
            </div>
          </div>
          <div className="mt-[10px] pl-[2px]">
            <GroupTitle>
              <svg viewBox="0 0 8 10" className="h-[10px] w-2" fill="none" stroke="#222"><path d="M1 1 4 4 7 1M1 5 4 8 7 5" /></svg>
              Export options
            </GroupTitle>
          </div>
        </div>
        <hr className="mt-[13px] border-[#999]" />
        <div className="mt-3 flex justify-end pr-[97px]">
          <button type="button" disabled className="h-[23px] w-[76px] border border-t-white border-l-white border-r-[#777] border-b-[#777] text-[#888]">Export</button>
        </div>
      </div>
    </section>
  );
}

const SIDE_TOOLS = [["maskBox", "Mask"], ["maskCheck", "Mask not shown"], ["maskPart", "Unmask adjacent"], ["maskFull", "Unmask all"], ["maskRev", "Reverse"], ["maskRound", "Spherical"]];

const PAGES = [["assemblies", "find", "translate", ""], ["organize", "mask", "rotate", ""], ["", "", "", ""]];

function DisplaySelect({ icon, value, label }) {
  return (
    <div className="relative mx-px flex h-5 w-[98px] shrink-0 items-center bg-white">
      <span className="pointer-events-none absolute left-px flex flex-col">
        <Icon name={icon} className="h-[14px] w-4" />
        <span className="h-1 w-4 bg-linear-to-r from-red-600 via-green-400 to-yellow-300" />
      </span>
      <select aria-label={label} defaultValue={value} className="size-full appearance-none pl-5 outline-none">
        <option>{value}</option>
      </select>
      <svg viewBox="0 0 8 5" className="pointer-events-none absolute right-1 h-[5px] w-2"><path d="M0 0H8L4 5Z" /></svg>
    </div>
  );
}

function Workspace() {
  return (
    <section className="flex min-w-0 flex-1 flex-col">
      <div className="flex min-h-0 flex-1 pt-[17px]">
        <div className="flex w-9 shrink-0 flex-col items-center pl-1">
          <span className="flex h-[11px] gap-[5px] pt-1">
            {[0, 1, 2, 3].map((i) => (
              <span key={i} className="size-[2px] bg-black" />
            ))}
          </span>
          {SIDE_TOOLS.map(([icon, label]) => (
            <button key={icon} type="button" aria-label={label} className="flex h-7 w-7 shrink-0 items-center justify-center">
              <Icon name={icon} />
            </button>
          ))}
        </div>
        <Viewport />
      </div>
      <div className="h-[95px] shrink-0 overflow-hidden pl-1">
        <div className="flex h-[38px] items-center border-b border-[#999] pb-1">
          <ToolRow items={BOTTOM_ROW} />
          <DisplaySelect icon="surfFill" value="Auto" label="Geometry color" />
          <Tool icon="surfWire" label="Wireframe" flags="m" />
          <Tool icon="surfFill" label="Shaded" flags="m" />
          <Tool icon="cubeFill" label="Transparency" />
          <Divider />
          <DisplaySelect icon="cubeFill" value="By Comp" label="Element color" />
        </div>
        <div className="mt-[14px] grid grid-cols-[273px_273px_268px_1fr] text-[14px]">
          {PAGES.flat().map((name, i) => (
            <button key={i} type="button" className="h-5 border border-t-white border-l-white border-r-[#666] border-b-[#666] leading-4">
              {name}
            </button>
          ))}
        </div>
      </div>
    </section>
  );
}

/* ---------- save dialog ---------- */

const PLACES = [
  ["最近访问的位置", <><path d="M4 24 10 19H27L30 25 18 31Z" fill="#d8dde2" stroke="#8a9098" /><circle cx="10" cy="9" r="7.500" fill="#dfe7ee" stroke="#9aa6b0" strokeWidth="1.500" /><path d="M10 4V9H14" fill="none" stroke="#788" /><path d="M12 4 25 6 24 20 11 18Z" fill="#f6fafd" stroke="#9ab" /><path d="M14 8 22 9M14 11 22 12" stroke="#69b" /><path d="M8 17 20 15 21 23 10 25Z" fill="#4aa0e0" stroke="#def" /></>],
  ["桌面", <><rect x="1" y="4" width="30" height="24" fill="#b4c8dc" /><rect x="2.500" y="5.500" width="27" height="21" fill="#2d6bd0" /><path d="M2.500 5.500H28L2.500 20Z" fill="#5a94e8" /><path d="M2.500 23H29.500V26.500H2.500Z" fill="#183a68" /><circle cx="5" cy="24" r="2" fill="#5ce" /></>],
  ["库", <><path d="M1 5H10L12 3H20L22 6H31V29H1Z" fill="#e8cf78" stroke="#c8a848" /><path d="M4 2H9V5H4Z" fill="#3ca03c" /><path d="M12 4H17V7H12Z" fill="#d05030" /><path d="M21 6H26V9H21Z" fill="#4aa0d0" /><path d="M2 9H31V29H2Z" fill="#f8e6a4" /><path d="M5 20H27V31H21V25H11V31H5Z" fill="#8cc8ec" stroke="#4a9cc8" /></>],
  ["计算机", <><path d="M2 6 9 3V26L2 23Z" fill="#c4c8cc" stroke="#888" strokeWidth="0.8" /><path d="M8 3 30 4 28 22 12 20Z" fill="#e0e4ea" stroke="#99a" /><path d="M11 5 28 6 26.500 20 13.500 18Z" fill="#1620c0" /><path d="M18 5.500 28 6 26.500 20Z" fill="#5a78f0" /><ellipse cx="21" cy="27" rx="8" ry="3" fill="#d4d8dc" stroke="#999" strokeWidth="0.8" /></>],
  ["网络", <><circle cx="13" cy="13" r="12.500" fill="#2878c8" /><path d="M3 7C8 0 16 1 18 3 14 10 10 9 8 15 5 14 2 12 3 7ZM8 20C12 16 16 18 15 24 12 26 9 24 8 20Z" fill="#58b848" /><path d="M11 10 31 11 29 26 14 25Z" fill="#e0e4ea" stroke="#99a" /><path d="M14 12 29 13 27.500 24 16 23Z" fill="#1828b8" /><ellipse cx="22" cy="29" rx="7" ry="2.500" fill="#d4d8dc" stroke="#999" strokeWidth="0.8" /></>],
];

const FILES = [["OptiStruct_Linear_Analysis_CN", "2014/8/13 9:31"], ["OptiStruct_Optimization", "2014/8/14 9:40"]];

function FolderSmall() {
  return <svg viewBox="0 0 14 16" className="h-4 w-[14px] shrink-0"><path d="M1 2 6 1V15L1 14Z" fill="#e8c860" /><path d="M5 2H12L13 4V14L5 15Z" fill="#f4dc88" stroke="#d0b050" strokeWidth="0.6" /><path d="M7 3V14" stroke="#fff6cc" strokeWidth="1.500" /></svg>;
}

function Mono({ children }) {
  return <span className="font-['Liberation_Mono',monospace] text-[10px]">{children}</span>;
}

const COMBO = "relative flex border-t-2 border-l-2 border-r border-b border-t-[#777] border-l-[#777] border-r-[#ccc] border-b-[#ccc] bg-white font-['Liberation_Mono',monospace] text-[10px]";
const PUSH = "flex h-[23px] items-center justify-center border border-t-white border-l-white border-r-[#666] border-b-[#666] bg-[#f0f0f0] shadow-[1px_1px_0_#999]";

function SaveDialog() {
  const [name, setName] = useState("su");
  return (
    <div role="dialog" aria-label="Select IGES file" className="absolute top-[282px] left-[313px] w-[570px] rounded-[7px] border border-[#222] bg-white/35 pr-[5px] pb-[5px] pl-[6px] text-[12px] shadow-[inset_0_0_0_1px_rgba(255,255,255,0.6),0_0_12px_3px_rgba(0,0,0,0.75)] backdrop-blur-[5px]">
      <div className="flex h-7 items-start justify-between">
        <div className="flex h-7 items-center gap-[6px] pl-[2px] font-['Noto_Sans',sans-serif]">
          <Logo />
          Select IGES file
        </div>
        <button type="button" aria-label="Close" className="flex h-[18px] w-[47px] items-center justify-center rounded-b border border-t-0 border-[#4a1410] bg-linear-to-b from-[#dda49a] via-[#b83c28] to-[#c8604c] text-white">
          <X size={13} strokeWidth={3.5} />
        </button>
      </div>
      <div className="border border-[#555] bg-[#f0f0f0] pb-[5px]">
        <div className="flex h-9 items-center pt-1">
          <label htmlFor="folder" className="w-[99px] pr-2 text-right">保存在<Mono>(I):</Mono></label>
          <div className={COMBO + " h-[23px] w-[259px] items-center pl-1"}>
            <FolderSmall />
            <select id="folder" defaultValue="temp" className="h-full flex-1 appearance-none pl-[6px] outline-none">
              <option>temp</option>
            </select>
            <DropArrow className="absolute top-0 right-0 h-5 w-4" />
          </div>
          <div className="flex items-center gap-[7px] pl-[18px]">
            <button type="button" aria-label="Back"><svg viewBox="0 0 14 12" className="h-3 w-[14px]"><path d="M0 6 6 1V4H13V8H6V11Z" fill="#8a8a8a" /></svg></button>
            <button type="button" aria-label="Up one level"><svg viewBox="0 0 16 16" className="size-4"><path d="M1 14V3L3 1H7L8 3H15V14Z" fill="#f8f48c" stroke="#111" strokeWidth="1.200" /><path d="M7 5V11H12M4.500 7.500 7 5 9.500 7.500" fill="none" stroke="#111" strokeWidth="1.500" /></svg></button>
            <button type="button" aria-label="New folder"><svg viewBox="0 0 17 16" className="h-4 w-[17px]"><path d="M1 15V6L2 5H6L7 6H12V15Z" fill="#f4f06c" stroke="#111" strokeWidth="1.200" /><path d="M13 0V3M13 6V9M9 4H11M15 4H17M10 1 11.500 2.500M16 1 14.500 2.500M16 8 14.500 6.500" stroke="#111" /></svg></button>
            <button type="button" aria-label="View" className="flex items-center gap-[2px]"><svg viewBox="0 0 16 16" className="size-4"><rect x="0.500" y="0.500" width="15" height="14" fill="#fff" stroke="#111" /><path d="M1 1H15V4H1Z" fill="#14146c" /><path d="M3 7H5M7 7H9M11 7H13M3 9.500H5M7 9.500H9M11 9.500H13M3 12H5M7 12H9M11 12H13" stroke="#14146c" strokeWidth="1.200" /></svg><svg viewBox="0 0 9 5" className="h-[5px] w-[9px]"><path d="M0 0H9L4.500 5Z" /></svg></button>
          </div>
        </div>
        <div className="flex pr-[6px]">
          <nav className="flex w-[99px] shrink-0 flex-col items-center">
            {PLACES.map(([label, art]) => (
              <a key={label} href="#place" className="flex h-[63px] w-[78px] flex-col items-center gap-px text-center leading-3">
                <svg viewBox="0 0 32 32" className="size-8 shrink-0" aria-hidden="true">{art}</svg>
                {label}
              </a>
            ))}
          </nav>
          <div className="min-w-0 flex-1">
            <div className="h-[238px] bg-white font-['Noto_Sans','Noto_Sans_CJK_SC',sans-serif]">
              <table className="h-full w-full table-fixed border-collapse text-left">
                <thead>
                  <tr className="h-6 border-b border-[#ddd]">
                    <th className="relative w-[306px] border-r border-[#9cd4ec] bg-linear-to-b from-[#f2fafe] to-[#cfeaf8] pl-[6px] font-normal">
                      名称
                      <svg viewBox="0 0 6 4" className="absolute top-[2px] left-[150px] h-1 w-[6px]"><path d="M0 4H6L3 0Z" fill="#4a7a9c" /></svg>
                    </th>
                    <th className="w-[135px] border-r border-[#ddd] bg-linear-to-b from-white to-[#f2f3f5] pl-[6px] font-normal">修改日期</th>
                    <th className="overflow-hidden pl-[6px] font-normal whitespace-nowrap">类型</th>
                  </tr>
                </thead>
                <tbody>
                  {FILES.map(([file, date]) => (
                    <tr key={file} className="h-[21px]">
                      <td className="border-r border-[#eee] pl-2 whitespace-nowrap"><span className="flex items-center gap-1"><FolderSmall />{file}</span></td>
                      <td className="border-r border-[#eee] pl-[6px] whitespace-nowrap">{date}</td>
                      <td className="overflow-hidden pl-[6px] whitespace-nowrap">文件夹</td>
                    </tr>
                  ))}
                  <tr><td className="border-r border-[#eee]" /><td className="border-r border-[#eee]" /><td /></tr>
                </tbody>
              </table>
            </div>
            <div className="flex h-4 items-center">
              <button type="button" aria-label="Scroll left" className="flex w-[18px] justify-center"><svg viewBox="0 0 4 8" className="h-[7px] w-1"><path d="M4 0V8L0 4Z" fill="#333" /></svg></button>
              <div className="flex-1">
                <div className="flex h-[15px] w-[279px] items-center justify-center gap-[2px] border border-[#999] bg-linear-to-b from-[#f4f4f4] to-[#cfcfcf]">
                  <span className="h-[6px] w-px bg-[#555]" />
                  <span className="h-[6px] w-px bg-[#555]" />
                  <span className="h-[6px] w-px bg-[#555]" />
                </div>
              </div>
              <button type="button" aria-label="Scroll right" className="flex w-[18px] justify-center"><svg viewBox="0 0 4 8" className="h-[7px] w-1"><path d="M0 0V8L4 4Z" fill="#333" /></svg></button>
            </div>
            <div className="flex justify-between pt-[9px]">
              <div className="flex flex-col gap-[6px]">
                <div className="flex h-[21px] items-center">
                  <label htmlFor="fname" className="w-24 shrink-0 pl-px">文件名<Mono>(N):</Mono></label>
                  <div className={COMBO + " h-[21px] w-[244px]"}>
                    <input id="fname" value={name} onChange={(e) => setName(e.target.value)} className="w-[14px] border-r border-black pl-px outline-none" />
                    <DropArrow className="absolute top-0 right-0 h-[18px] w-[17px]" />
                  </div>
                </div>
                <div className="flex h-[21px] items-center">
                  <label htmlFor="ftype" className="w-24 shrink-0 pl-px">保存类型<Mono>(T):</Mono></label>
                  <div className={COMBO + " h-[19px] w-[244px]"}>
                    <select id="ftype" className="size-full appearance-none pl-px outline-none" defaultValue="IGES files (*.iges,*.igs)">
                      <option>IGES files (*.iges,*.igs)</option>
                    </select>
                    <DropArrow className="absolute top-0 right-0 h-4 w-[17px]" />
                  </div>
                </div>
              </div>
              <div className="flex w-[90px] flex-col gap-[5px]">
                <button type="button" className={PUSH + " outline outline-[#666]"}>保存<Mono>(S)</Mono></button>
                <button type="button" className={PUSH}>取消</button>
                <button type="button" className={PUSH}><Mono>Manage...</Mono></button>
              </div>
            </div>
          </div>
        </div>
        <div className="flex h-4 items-end justify-end">
          <svg viewBox="0 0 12 12" className="-mb-1 size-3"><path d="M0 12 12 0M4 12 12 4M8 12 12 8" stroke="#888" strokeWidth="1.200" /></svg>
        </div>
      </div>
    </div>
  );
}

export default function App() {
  return (
    <div className="flex h-screen overflow-hidden bg-[#f0f0f0] font-['Liberation_Sans','Noto_Sans_CJK_SC',sans-serif] text-[11px] text-black">
      <BrowserStrip />
      <main className="relative flex min-w-0 flex-1 flex-col overflow-hidden">
        <header className="flex h-[22px] shrink-0 items-center gap-[6px] border-b border-[#444] bg-[#e2e2e2] pl-px font-['Noto_Sans',sans-serif] text-[12px]">
          <Logo />
          Untitled - HyperWorks v13.0 - OptiStruct
        </header>
        <nav className="flex h-[19px] shrink-0 items-center gap-[15px] border-b border-[#999] bg-linear-to-b from-[#e8e8ee] to-[#d0d4e4] pl-[7px] font-['Noto_Sans',sans-serif] text-[12px] text-[#333]">
          {MENUS.map((menu) => (
            <button key={menu} type="button" className="shrink-0">{menu}</button>
          ))}
        </nav>
        <div className="flex h-[33px] shrink-0 items-center overflow-hidden">
          <ToolRow items={TOP_ROW} />
        </div>
        <div className="flex h-[33px] shrink-0 items-center overflow-hidden">
          <ToolRow items={CHECK_ROW} />
        </div>
        <div className="flex min-h-0 flex-1">
          <ExportPanel />
          <Workspace />
        </div>
        <SaveDialog />
        {/* player bar shown over the recording */}
        <div className="pointer-events-none absolute inset-x-0 top-0 flex h-[70px] items-center justify-between bg-linear-to-b from-black/65 to-transparent pr-[329px] pl-[25px] font-['Noto_Sans',sans-serif] text-[20px] font-medium text-white">
          <span>hm1010.mp4</span>
          <span>21:40</span>
        </div>
      </main>
    </div>
  );
}
